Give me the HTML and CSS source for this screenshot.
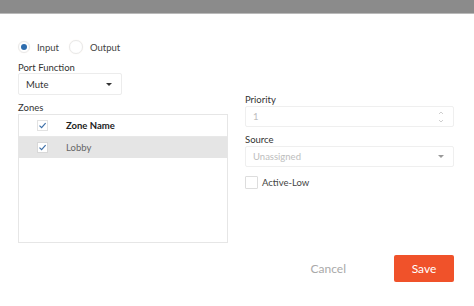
FILE: index.html
```html
<!DOCTYPE html>
<html lang="en">
<head>
    <meta charset="UTF-8">
    <title>Port Settings</title>
    <link rel="stylesheet" href="styles.css">
</head>
<body>
<div class="topbar"></div>

<div class="dialog">
    <div class="radios">
        <label class="radio checked"><span class="dot"></span>Input</label>
        <label class="radio"><span class="dot"></span>Output</label>
    </div>

    <div class="columns">
        <div class="col-left">
            <div class="label">Port Function</div>
            <div class="select select-small">
                <span>Mute</span>
                <span class="caret"></span>
            </div>

            <div class="label label-zones">Zones</div>
            <div class="table">
                <div class="row head">
                    <span class="cell-check"><svg width="11" height="11" viewBox="0 0 11 11"><rect x="0.5" y="0.5" width="10" height="10" fill="#fff" stroke="#e2e2e2"/><path d="M2.5 5.6 L4.6 7.6 L8.6 3.2" fill="none" stroke="#3d6fa8" stroke-width="1.2"/></svg></span>
                    <span class="cell-name">Zone Name</span>
                </div>
                <div class="row selected">
                    <span class="cell-check"><svg width="11" height="11" viewBox="0 0 11 11"><rect x="0.5" y="0.5" width="10" height="10" fill="#fff" stroke="#d8d8d8"/><path d="M2.5 5.6 L4.6 7.6 L8.6 3.2" fill="none" stroke="#3d6fa8" stroke-width="1.2"/></svg></span>
                    <span class="cell-name">Lobby</span>
                </div>
            </div>
        </div>

        <div class="col-right">
            <div class="label">Priority</div>
            <div class="field disabled">
                <span>1</span>
                <span class="spin"><svg width="6" height="14" viewBox="0 0 6 14"><path d="M1 4 L3 2 L5 4" fill="none" stroke="#cfcfcf"/><path d="M1 10 L3 12 L5 10" fill="none" stroke="#cfcfcf"/></svg></span>
            </div>

            <div class="label">Source</div>
            <div class="field disabled">
                <span>Unassigned</span>
                <span class="caret caret-light"></span>
            </div>

            <label class="checkbox"><span class="box"></span>Active-Low</label>
        </div>
    </div>

    <div class="footer">
        <button class="btn-cancel">Cancel</button>
        <button class="btn-save">Save</button>
    </div>
</div>
</body>
</html>
```

FILE: styles.css
```css
html, body {
    margin: 0;
    background: #fff;
}
body {
    font-family: Lato, "Liberation Sans", sans-serif;
    font-size: 9.5px;
    color: #333;
}
.topbar {
    height: 13px;
    background: #8b8b8b;
    border-bottom: 1px solid #b9b9b9;
}
.dialog {
    padding: 27px 20px 0 18px;
}

.radios {
    display: flex;
    align-items: center;
    height: 12px;
}
.radio {
    display: flex;
    align-items: center;
    gap: 7px;
    margin-right: 10px;
    color: #444;
}
.radio .dot {
    width: 12px;
    height: 12px;
    border: 1px solid #e8e8e8;
    border-radius: 50%;
    box-sizing: border-box;
    position: relative;
    box-shadow: 0 0 1px #f2e6d8;
}
.radio:last-child .dot {
    width: 14px;
    height: 14px;
}
.radio.checked .dot::after {
    content: "";
    position: absolute;
    left: 2px;
    top: 2px;
    width: 6px;
    height: 6px;
    border-radius: 50%;
    background: #2e6dae;
}

.columns {
    display: grid;
    grid-template-columns: 210px 209px;
    gap: 17px;
}
.label {
    color: #333;
    line-height: 12px;
    margin-top: 9px;
    margin-bottom: -1px;
}
.label-zones {
    margin-top: 7px;
    margin-bottom: 0;
}

.select, .field {
    height: 21px;
    border: 1px solid #ececec;
    border-radius: 2px;
    box-sizing: border-box;
    display: flex;
    align-items: center;
    justify-content: space-between;
    padding: 0 9px 0 7px;
}
.select-small {
    width: 104px;
    height: 22px;
    color: #333;
}
.caret {
    width: 0;
    height: 0;
    border-left: 3px solid transparent;
    border-right: 3px solid transparent;
    border-top: 3px solid #333;
}
.caret-light {
    border-top-color: #999;
}

.table {
    height: 129px;
    border: 1px solid #e6e6e6;
    box-sizing: border-box;
}
.row {
    height: 21px;
    display: flex;
    align-items: center;
}
.row.head {
    border-bottom: 1px solid #e8e8e8;
    font-weight: bold;
    color: #222;
}
.row.selected {
    background: #e5e5e5;
    color: #666;
}
.cell-check {
    width: 47px;
    display: flex;
    justify-content: center;
}
.cell-check svg {
    display: block;
}

.col-right {
    padding-top: 41px;
}
.col-right .label {
    margin-top: 7px;
    margin-bottom: 0;
}
.col-right .label:first-child {
    margin-top: 0;
}
.field.disabled {
    color: #bdbdbd;
    border-color: #efefef;
}
.spin svg {
    display: block;
}

.checkbox {
    display: flex;
    align-items: center;
    gap: 4px;
    margin-top: 9px;
    color: #444;
}
.checkbox .box {
    width: 13px;
    height: 13px;
    border: 1px solid #ddd;
    box-sizing: border-box;
    border-radius: 1px;
}

.footer {
    display: flex;
    justify-content: flex-end;
    align-items: center;
    gap: 48px;
    margin-top: 12px;
}
.btn-cancel, .btn-save {
    font-family: Lato, "Liberation Sans", sans-serif;
    font-size: 12px;
    border: none;
    cursor: pointer;
}
.btn-cancel {
    background: none;
    color: #a9a9a9;
    padding: 0;
}
.btn-save {
    width: 60px;
    height: 27px;
    background: #f0522a;
    color: #fff;
    border-radius: 2px;
}
```
